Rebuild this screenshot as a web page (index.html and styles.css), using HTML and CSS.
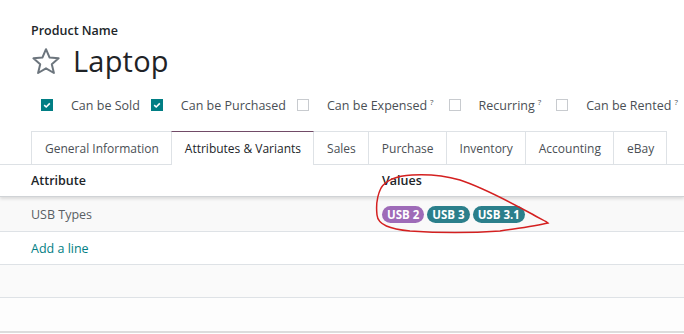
FILE: index.html
```html
<!DOCTYPE html>
<html>
<head>
<meta charset="utf-8">
<link rel="stylesheet" href="styles.css">
</head>
<body>
<div class="page">
  <div class="head">
    <div class="label">Product Name</div>
    <div class="title">
      <svg class="star" width="30" height="28" viewBox="0 0 30 28"><path d="M15 2.2 L18.6 10.6 L27.6 11.3 L20.8 17.2 L22.9 26 L15 21.3 L7.1 26 L9.2 17.2 L2.4 11.3 L11.4 10.6 Z" fill="none" stroke="#6c757d" stroke-width="2" stroke-linejoin="round"/></svg>
      <span class="name">Laptop</span>
    </div>
    <div class="checks">
      <span class="cb on"><svg viewBox="0 0 12 12" width="12" height="12"><path d="M3.2 6.2 L5.2 8 L8.8 4.4" fill="none" stroke="#fff" stroke-width="1.6"/></svg></span><span class="ck">Can be Sold</span>
      <span class="cb on"><svg viewBox="0 0 12 12" width="12" height="12"><path d="M3.2 6.2 L5.2 8 L8.8 4.4" fill="none" stroke="#fff" stroke-width="1.6"/></svg></span><span class="ck">Can be Purchased</span>
      <span class="cb"></span><span class="ck">Can be Expensed<sup>?</sup></span>
      <span class="cb"></span><span class="ck">Recurring<sup>?</sup></span>
      <span class="cb"></span><span class="ck">Can be Rented<sup>?</sup></span>
    </div>
  </div>
  <div class="tabs">
    <span class="tab">General Information</span>
    <span class="tab active">Attributes &amp; Variants</span>
    <span class="tab">Sales</span>
    <span class="tab">Purchase</span>
    <span class="tab">Inventory</span>
    <span class="tab">Accounting</span>
    <span class="tab">eBay</span>
  </div>
  <div class="table">
    <div class="row thead"><span class="c1">Attribute</span><span class="c2">Values</span></div>
    <div class="row r1"><span class="c1 muted">USB Types</span>
      <span class="c2 tags"><span class="tag purple">USB 2</span><span class="tag teal">USB 3</span><span class="tag teal">USB 3.1</span></span></div>
    <div class="row r2"><span class="c1 link">Add a line</span></div>
    <div class="row r3"></div>
    <div class="row r4"></div>
  </div>
  <svg class="scribble" width="684" height="334" viewBox="0 0 684 334"><path d="M381 188 C386 180 395 176 412 175 C430 174 446 176 460 180 C484 188 510 202 532 214 C540 219 546 221 548 223 C536 226 520 228 500 231 C470 233 440 233 410 231 C390 229 378 225 377 215 C376 206 377 196 381 188" fill="none" stroke="#d42020" stroke-width="1.5"/></svg>
</div>
</body>
</html>
```
FILE: styles.css
```css
html, body { margin: 0; padding: 0; background: #fff; }
body { font-family: "Open Sans", "Noto Sans", sans-serif; color: #212529; font-size: 12px; }
.page { position: relative; width: 684px; height: 334px; overflow: hidden; }
.head { padding: 22px 0 0 31px; }
.label { font-weight: 600; font-size: 12.5px; line-height: 18px; }
.title { display: flex; align-items: center; gap: 12px; height: 36px; margin-top: 3px; }
.star { flex: none; }
.name { font-size: 29px; line-height: 36px; font-weight: 400; color: #1f2327; letter-spacing: 0.2px; }
.checks { display: flex; align-items: center; height: 22px; margin-top: 15px; padding-left: 10px; color: #4a4f55; font-size: 12.5px; }
.cb { width: 10px; height: 10px; border: 1px solid #c8cbcf; background: #fff; display: inline-flex; flex: none; }
.cb.on { width: 12px; height: 12px; border: none; background: #017e84; }
.ck { margin: 0 11px 0 18px; white-space: nowrap; }
.ck sup { font-size: 8px; vertical-align: 0; position: relative; top: -5px; margin-left: 3px; margin-right: 4px; }
.tabs { display: flex; margin-top: 15px; padding-left: 31px; border-bottom: 1px solid #dee2e6; height: 33px; }
.tab { display: flex; align-items: center; padding: 0 12px 0 13px; border: 1px solid #dee2e6; border-bottom: none; margin-right: -1px; color: #4a4f55; font-size: 12px; height: 33px; box-sizing: border-box; }
.tab.active { border-top: 1px solid #714b67; background: #fff; height: 34px; color: #212529; position: relative; z-index: 1; }
.row { display: flex; align-items: center; height: 33px; border-bottom: 1px solid #dee2e6; box-sizing: border-box; font-size: 12.5px; }
.thead { height: 32px; font-weight: 600; border-bottom: 1px solid #d0d3d6; box-shadow: 0 2px 3px rgba(0,0,0,0.12); position: relative; }
.c1 { width: 351px; padding-left: 31px; flex: none; }
.c2 { flex: 1; }
.r1 { background: #f9f9f9; height: 35px; }
.r2 { background: #fff; }
.r3 { background: #fafafa; }
.r4 { background: #fdfdfd; height: 35px; border-bottom: 2px solid #dcdcdc; }
.muted { color: #5a5f64; }
.link { color: #017e84; }
.tags { display: flex; gap: 3px; }
.tag { color: #fff; font-weight: 700; font-size: 11.5px; line-height: 17px; height: 17px; padding: 0 5px; border-radius: 9px; }
.purple { background: #9e6bb8; }
.teal { background: #2b7f8b; }
.scribble { position: absolute; left: 0; top: 0; pointer-events: none; z-index: 10; }
```
